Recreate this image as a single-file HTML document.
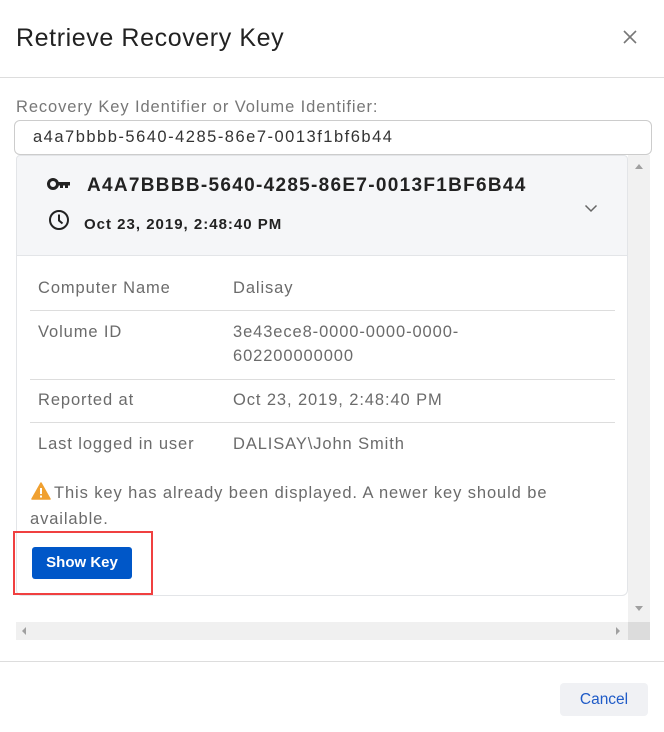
<!DOCTYPE html>
<html><head><meta charset="utf-8"><style>
*{box-sizing:border-box;margin:0;padding:0}
body{width:664px;height:732px;background:#fff;font-family:"Liberation Sans",sans-serif;position:relative;overflow:hidden;color:#222}
.a{position:absolute;white-space:nowrap}
.g{color:#6b6b6b;font-size:16.5px;letter-spacing:0.9px}
</style></head><body>
<div class="a" style="left:16px;top:24px;font-size:25px;color:#222;letter-spacing:0.6px">Retrieve Recovery Key</div>
<svg class="a" style="left:622px;top:29px" width="16" height="16" viewBox="0 0 16 16"><path d="M2 2L14 14M14 2L2 14" stroke="#777" stroke-width="1.6"/></svg>
<div class="a" style="left:0;top:77px;width:664px;height:1px;background:#ddd"></div>
<div class="a g" style="left:16px;top:98px;color:#777">Recovery Key Identifier or Volume Identifier:</div>
<div class="a" style="left:14px;top:120px;width:638px;height:35px;border:1px solid #ccc;border-radius:6px"></div>
<div class="a" style="left:33px;top:128px;font-size:16.5px;color:#333;letter-spacing:1.5px">a4a7bbbb-5640-4285-86e7-0013f1bf6b44</div>
<div class="a" style="left:628px;top:155px;width:22px;height:485px;background:#f1f1f1"></div>
<div class="a" style="left:16px;top:622px;width:612px;height:18px;background:#f0f0f0"></div>
<div class="a" style="left:628px;top:622px;width:22px;height:18px;background:#dcdcdc"></div>
<svg class="a" style="left:634px;top:162px" width="10" height="8"><path d="M1 7L5 2L9 7Z" fill="#a0a0a0"/></svg>
<svg class="a" style="left:634px;top:605px" width="10" height="8"><path d="M1 1L5 6L9 1Z" fill="#a0a0a0"/></svg>
<svg class="a" style="left:20px;top:626px" width="8" height="10"><path d="M6 1L2 5L6 9Z" fill="#a0a0a0"/></svg>
<svg class="a" style="left:614px;top:626px" width="8" height="10"><path d="M2 1L6 5L2 9Z" fill="#a0a0a0"/></svg>
<div class="a" style="left:16px;top:155px;width:612px;height:101px;background:#f5f6f8;border:1px solid #e3e5e8;border-radius:4px 4px 0 0"></div>
<svg class="a" style="left:47px;top:177px" width="24" height="14" viewBox="0 0 24 14"><circle cx="6" cy="7" r="4.5" fill="none" stroke="#222" stroke-width="3"/><path d="M10 5H23V8.5H21V11H18V8.5H16V11H13V8.5H10Z" fill="#222"/></svg>
<div class="a" style="left:87px;top:175px;font-size:19px;font-weight:bold;color:#222;letter-spacing:1.3px">A4A7BBBB-5640-4285-86E7-0013F1BF6B44</div>
<svg class="a" style="left:48px;top:209px" width="22" height="22" viewBox="0 0 22 22"><circle cx="11" cy="11" r="9" fill="none" stroke="#222" stroke-width="2"/><path d="M11 5.5V11.5L14.5 14.5" fill="none" stroke="#222" stroke-width="2"/></svg>
<div class="a" style="left:84px;top:216px;font-size:15px;font-weight:bold;color:#222;letter-spacing:1px">Oct 23, 2019, 2:48:40 PM</div>
<svg class="a" style="left:584px;top:204px" width="14" height="9"><path d="M1.5 1.5L7 7L12.5 1.5" fill="none" stroke="#666" stroke-width="1.5"/></svg>
<div class="a" style="left:16px;top:255px;width:612px;height:341px;border:1px solid #e3e5e8;border-radius:0 0 6px 6px"></div>
<div class="a g" style="left:38px;top:279px">Computer Name</div><div class="a g" style="left:233px;top:279px">Dalisay</div>
<div class="a" style="left:30px;top:310px;width:585px;height:1px;background:#ddd"></div>
<div class="a g" style="left:38px;top:323px">Volume ID</div><div class="a g" style="left:233px;top:323px">3e43ece8-0000-0000-0000-</div><div class="a g" style="left:233px;top:347px">602200000000</div>
<div class="a" style="left:30px;top:379px;width:585px;height:1px;background:#ddd"></div>
<div class="a g" style="left:38px;top:391px">Reported at</div><div class="a g" style="left:233px;top:391px">Oct 23, 2019, 2:48:40 PM</div>
<div class="a" style="left:30px;top:422px;width:585px;height:1px;background:#ddd"></div>
<div class="a g" style="left:38px;top:435px">Last logged in user</div><div class="a g" style="left:233px;top:435px">DALISAY\John Smith</div>
<svg class="a" style="left:31px;top:482px" width="20" height="18" viewBox="0 0 20 18"><path d="M10 1L19 17H1Z" fill="#f0a030" stroke="#f0a030" stroke-linejoin="round" stroke-width="1.5"/><rect x="9" y="6" width="2" height="6" fill="#fff"/><rect x="9" y="13.5" width="2" height="2" fill="#fff"/></svg>
<div class="a g" style="left:54px;top:484px">This key has already been displayed. A newer key should be</div>
<div class="a g" style="left:30px;top:510px">available.</div>
<div class="a" style="left:13px;top:531px;width:140px;height:64px;border:2px solid #f04040"></div>
<div class="a" style="left:32px;top:547px;width:100px;height:32px;background:#0057c8;border-radius:3px;color:#fff;font-size:15px;font-weight:bold;text-align:center;line-height:32px">Show Key</div>
<div class="a" style="left:0;top:661px;width:664px;height:1px;background:#ddd"></div>
<div class="a" style="left:560px;top:683px;width:88px;height:33px;background:#f0f1f4;border-radius:4px;color:#1f5bc7;font-size:15.5px;text-align:center;line-height:33px">Cancel</div>
</body></html>
